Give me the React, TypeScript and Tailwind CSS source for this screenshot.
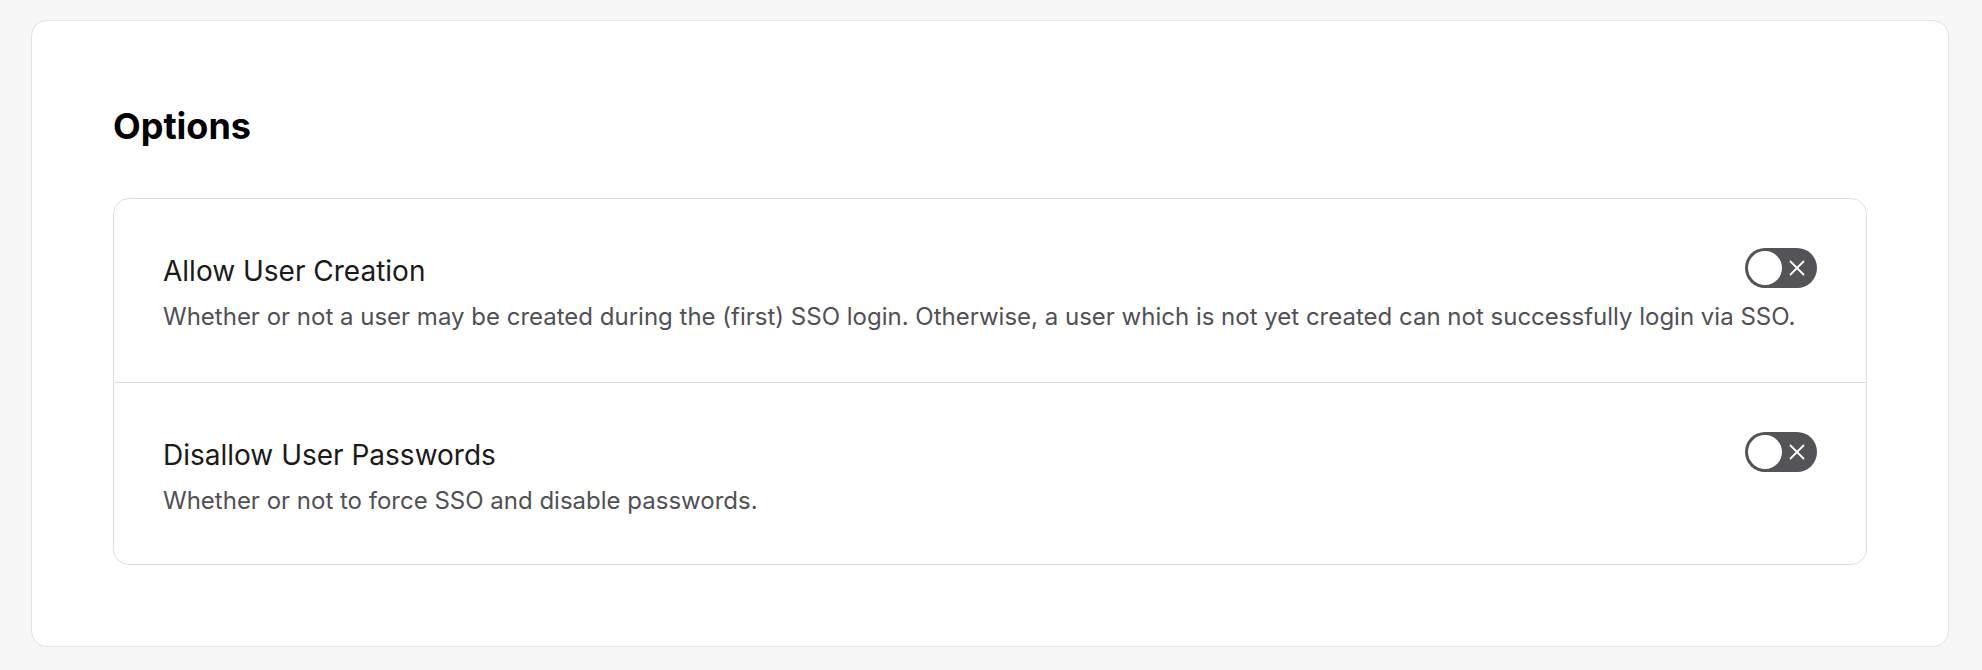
import React from "react";

function Toggle() {
  return (
    <div className="relative mt-[-3px] flex h-[40px] w-[72px] shrink-0 items-center rounded-full bg-[#545458]">
      <div className="ml-[3px] h-[34px] w-[34px] rounded-full bg-white" />
      <svg
        className="absolute right-[12px] top-[12px]"
        width="16"
        height="16"
        viewBox="0 0 16 16"
        fill="none"
        stroke="white"
        strokeWidth="1.8"
        strokeLinecap="round"
      >
        <path d="M1.5 1.5L14.5 14.5M14.5 1.5L1.5 14.5" />
      </svg>
    </div>
  );
}

function Row({ title, desc, last }: { title: string; desc: string; last?: boolean }) {
  return (
    <div
      className={`flex flex-col gap-[8px] px-[49px] pt-[52px] ${
        last ? "pb-[45px]" : "pb-[47px] border-b border-[#e0e0e0]"
      }`}
    >
      <div className="flex items-start justify-between gap-8">
        <div className="text-[28px] leading-[40px] text-[#1a1a1a]">{title}</div>
        <Toggle />
      </div>
      <div className="text-[24px] leading-[36px] text-[#505055]">{desc}</div>
    </div>
  );
}

export default function App() {
  return (
    <div
      className="min-h-[670px] bg-[#f7f7f7] pl-[31px] pr-[33px] pt-[20px] pb-[24px]"
      style={{ fontFamily: "Inter, 'Noto Sans', sans-serif" }}
    >
      <div className="rounded-[16px] border border-[#e2e2e2] bg-white px-[81px] pt-[85px] pb-[81px]">
        <h2 className="text-[36px] font-bold leading-[40px] text-black">Options</h2>
        <div className="mt-[52px] rounded-[16px] border border-[#e0e0e0]">
          <Row
            title="Allow User Creation"
            desc="Whether or not a user may be created during the (first) SSO login. Otherwise, a user which is not yet created can not successfully login via SSO."
          />
          <Row title="Disallow User Passwords" desc="Whether or not to force SSO and disable passwords." last />
        </div>
      </div>
    </div>
  );
}
